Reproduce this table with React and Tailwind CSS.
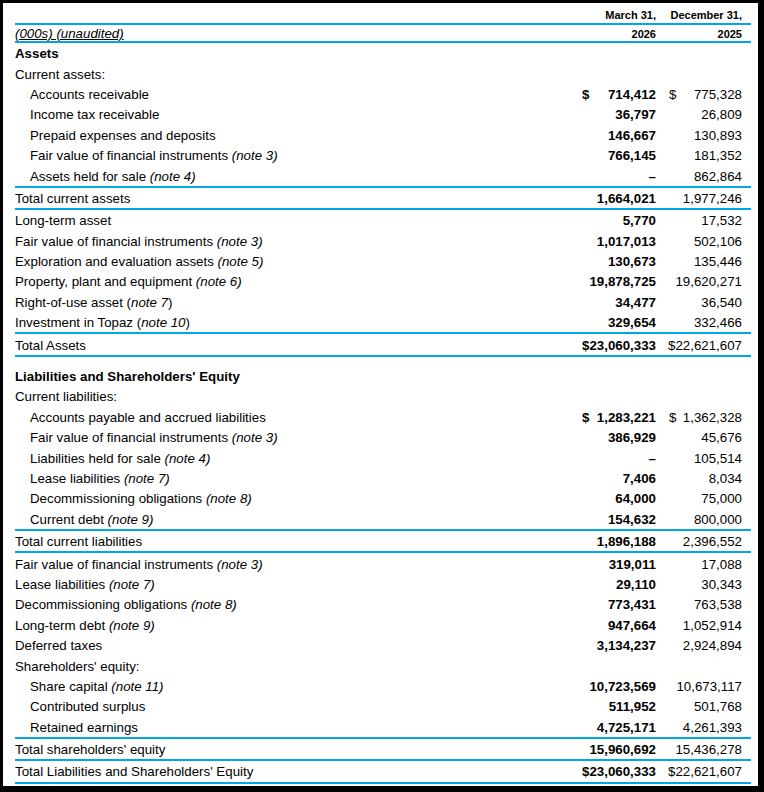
import React from "react";

const N = ({ children }) => <i>{children}</i>;

const rows = [
  { t: "sep" },
  { label: <b>Assets</b> },
  { label: "Current assets:" },
  { label: "Accounts receivable", ind: true, a: "714,412", b: "775,328", d: true },
  { label: "Income tax receivable", ind: true, a: "36,797", b: "26,809" },
  { label: "Prepaid expenses and deposits", ind: true, a: "146,667", b: "130,893" },
  { label: <>Fair value of financial instruments <N>(note 3)</N></>, ind: true, a: "766,145", b: "181,352" },
  { label: <>Assets held for sale <N>(note 4)</N></>, ind: true, a: "–", b: "862,864" },
  { t: "line" },
  { label: "Total current assets", a: "1,664,021", b: "1,977,246" },
  { t: "line" },
  { label: "Long-term asset", a: "5,770", b: "17,532" },
  { label: <>Fair value of financial instruments <N>(note 3)</N></>, a: "1,017,013", b: "502,106" },
  { label: <>Exploration and evaluation assets <N>(note 5)</N></>, a: "130,673", b: "135,446" },
  { label: <>Property, plant and equipment <N>(note 6)</N></>, a: "19,878,725", b: "19,620,271" },
  { label: <>Right-of-use asset (<N>note 7</N>)</>, a: "34,477", b: "36,540" },
  { label: <>Investment in Topaz (<N>note 10</N>)</>, a: "329,654", b: "332,466" },
  { t: "line" },
  { label: "Total Assets", a: "23,060,333", b: "22,621,607", dt: true },
  { t: "line" },
  { t: "gap" },
  { label: <b>Liabilities and Shareholders' Equity</b> },
  { label: "Current liabilities:" },
  { label: "Accounts payable and accrued liabilities", ind: true, a: "1,283,221", b: "1,362,328", d: true },
  { label: <>Fair value of financial instruments <N>(note 3)</N></>, ind: true, a: "386,929", b: "45,676" },
  { label: <>Liabilities held for sale <N>(note 4)</N></>, ind: true, a: "–", b: "105,514" },
  { label: <>Lease liabilities <N>(note 7)</N></>, ind: true, a: "7,406", b: "8,034" },
  { label: <>Decommissioning obligations <N>(note 8)</N></>, ind: true, a: "64,000", b: "75,000" },
  { label: <>Current debt <N>(note 9)</N></>, ind: true, a: "154,632", b: "800,000" },
  { t: "line" },
  { label: "Total current liabilities", a: "1,896,188", b: "2,396,552" },
  { t: "line" },
  { label: <>Fair value of financial instruments <N>(note 3)</N></>, a: "319,011", b: "17,088" },
  { label: <>Lease liabilities <N>(note 7)</N></>, a: "29,110", b: "30,343" },
  { label: <>Decommissioning obligations <N>(note 8)</N></>, a: "773,431", b: "763,538" },
  { label: <>Long-term debt <N>(note 9)</N></>, a: "947,664", b: "1,052,914" },
  { label: "Deferred taxes", a: "3,134,237", b: "2,924,894" },
  { label: "Shareholders' equity:" },
  { label: <>Share capital <N>(note 11)</N></>, ind: true, a: "10,723,569", b: "10,673,117" },
  { label: "Contributed surplus", ind: true, a: "511,952", b: "501,768" },
  { label: "Retained earnings", ind: true, a: "4,725,171", b: "4,261,393" },
  { t: "line" },
  { label: "Total shareholders' equity", a: "15,960,692", b: "15,436,278" },
  { t: "line" },
  { label: "Total Liabilities and Shareholders' Equity", a: "23,060,333", b: "22,621,607", dt: true },
  { t: "line" },
];

function Cell({ v, bold, dollar, total, w, ml }) {
  const cls = `${w} ${ml} flex ${bold ? "font-bold" : ""}`;
  if (dollar) {
    return (
      <div className={`${cls} justify-between`}>
        <span>$</span>
        <span>{v}</span>
      </div>
    );
  }
  if (total) {
    return (
      <div className={`${cls} justify-end`}>
        <span>${v}</span>
      </div>
    );
  }
  return <div className={`${cls} justify-end`}>{v}</div>;
}

export default function App() {
  return (
    <div
      className="w-[764px] h-[792px] bg-white text-black border-l-[3px] border-t-[3px] border-r-[6px] border-b-[6px] border-black pl-[12px] pr-[7px] overflow-hidden"
      style={{ fontFamily: '"Liberation Sans", Arial, sans-serif' }}
    >
      <div className="flex flex-col text-[13.3px]">
        <div className="h-[20px] flex items-end pb-[1px] text-[11px] font-bold leading-[13px]">
          <div className="flex-1" />
          <div className="w-[74px] text-right whitespace-nowrap">March 31,</div>
          <div className="w-[73px] ml-[13px] text-right whitespace-nowrap mr-[9px]">December 31,</div>
        </div>
        <div className="h-[2px] bg-[#00a6e6]" />
        <div className="h-[16px] flex items-center pt-[2px]">
          <div className="flex-1 italic underline leading-[16px]">(000s) (unaudited)</div>
          <div className="w-[74px] text-right text-[11px] font-bold">2026</div>
          <div className="w-[73px] ml-[13px] text-right text-[11px] font-bold mr-[9px]">2025</div>
        </div>
        {rows.map((r, i) => {
          if (r.t === "sep" || r.t === "line") return <div key={i} className="h-[2px] bg-[#00a6e6]" />;
          if (r.t === "gap") return <div key={i} className="h-[9px]" />;
          return (
            <div key={i} className="h-[20.4px] flex items-center pt-[2px] whitespace-nowrap leading-[16px]">
              <div className={`flex-1 ${r.ind ? "pl-[15px]" : ""}`}>{r.label}</div>
              {r.a !== undefined && (
                <>
                  <Cell v={r.a} bold dollar={r.d} total={r.dt} w="w-[74px]" ml="" />
                  <Cell v={r.b} dollar={r.d} total={r.dt} w="w-[73px]" ml="ml-[13px] mr-[9px]" />
                </>
              )}
            </div>
          );
        })}
      </div>
    </div>
  );
}
